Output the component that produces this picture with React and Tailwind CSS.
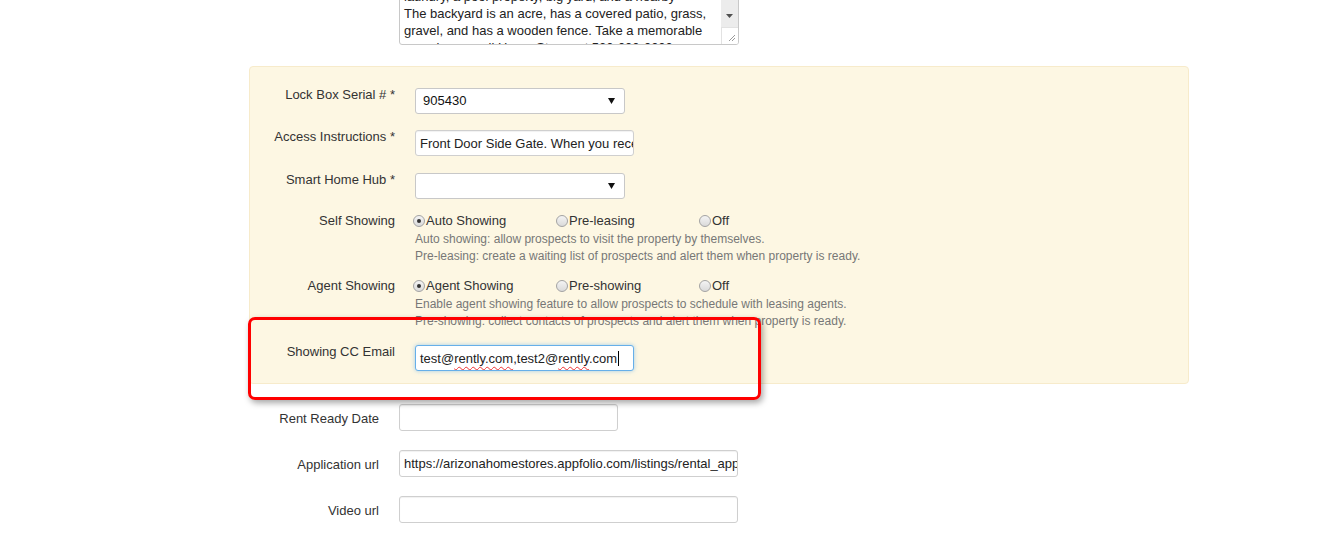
const font = { fontFamily: '"Liberation Sans", Arial, sans-serif' };

const Caret = () => (
  <svg width="7" height="6" viewBox="0 0 7 6" className="absolute right-[9px] top-1/2 -translate-y-1/2">
    <path d="M0 0 H7 L3.5 6 Z" fill="#111" />
  </svg>
);

const Select = ({ value, width }) => (
  <div className={`relative h-[26px] ${width} rounded-[3px] border border-[#c8c8c8] bg-white pl-[7px] text-[13px] leading-[24px] text-[#111]`}>
    {value}
    <Caret />
  </div>
);

const TextBox = ({ children, width, height = "h-[26px]", focus }) => (
  <div
    className={`${height} ${width} overflow-hidden whitespace-nowrap rounded-[3px] border bg-white pl-[4px] text-[13px] leading-[25px] text-[#222] ${
      focus
        ? "border-[#66afe9] shadow-[0_0_4px_rgba(102,175,233,0.6)]"
        : "border-[#cfcfcf] shadow-[inset_0_1px_1px_rgba(0,0,0,0.06)]"
    }`}
  >
    {children}
  </div>
);

const Radio = ({ checked, label }) => (
  <div className="flex w-[143px] items-center">
    <span className="flex h-[12px] w-[12px] items-center justify-center rounded-full border border-[#a3a3a3] bg-gradient-to-b from-[#f4f4f4] to-[#dadada]">
      {checked && <span className="h-[4px] w-[4px] rounded-full bg-[#333]" />}
    </span>
    <span className="ml-[1px] text-[13px] leading-[13px] text-[#333]">{label}</span>
  </div>
);

const PanelRow = ({ label, children, className = "" }) => (
  <div className={`flex gap-[20px] ${className}`}>
    <div className="w-[145px] shrink-0 text-right text-[13px] leading-[13px] text-[#333]">{label}</div>
    <div>{children}</div>
  </div>
);

const OuterRow = ({ label, children, className = "" }) => (
  <div className={`flex items-center gap-[20px] ${className}`}>
    <div className="w-[145px] shrink-0 pt-[2px] text-right text-[13px] text-[#333]">{label}</div>
    {children}
  </div>
);

const Help = ({ lines }) => (
  <div className="mt-[4px] text-[12px] leading-[17px] text-[#777]">
    {lines.map((l) => (
      <div key={l}>{l}</div>
    ))}
  </div>
);

export default function App() {
  return (
    <div className="relative h-[536px] w-[1326px] overflow-hidden bg-white" style={font}>
      <div className="ml-[234px] w-[970px]">
        {/* description textarea, scrolled */}
        <div className="ml-[165px] mt-[-44px] flex h-[89px] w-[340px] overflow-hidden rounded-[3px] border border-[#c8c8c8] bg-white">
          <div className="flex-1 overflow-hidden pl-[4px] pt-[14px] text-[13px] leading-[17px] text-[#222]">
            <div>bathrooms, a pool, a spacious family room, and</div>
            <div>laundry, a pool property, big yard, and a nearby</div>
            <div>The backyard is an acre, has a covered patio, grass,</div>
            <div>gravel, and has a wooden fence. Take a memorable</div>
            <div>experience, call Home Stores at 520-000-0000 or email</div>
          </div>
          <div className="flex w-[17px] shrink-0 flex-col">
            <div className="flex flex-1 items-end justify-center bg-[#ececec] pb-[9px]">
              <svg width="7" height="4" viewBox="0 0 7 4">
                <path d="M0 0 H7 L3.5 4 Z" fill="#505050" />
              </svg>
            </div>
            <div className="relative h-[17px] border-l border-t border-[#e2e2e2] bg-white">
              <svg width="9" height="9" viewBox="0 0 9 9" className="absolute bottom-[2px] right-[2px]">
                <path d="M8 2 L2 8 M8 5 L5 8" stroke="#9a9a9a" strokeWidth="1" />
              </svg>
            </div>
          </div>
        </div>

        {/* showing settings panel */}
        <div className="mx-[15px] mt-[21px] rounded-[4px] border border-[#f7ebcb] bg-[#fdf7e3] pb-[12px] pt-[21px]">
          <PanelRow label="Lock Box Serial # *">
            <Select value="905430" width="w-[210px]" />
          </PanelRow>
          <PanelRow label="Access Instructions *" className="mt-[16px]">
            <TextBox width="w-[219px]">Front Door Side Gate. When you receive the code</TextBox>
          </PanelRow>
          <PanelRow label="Smart Home Hub *" className="mt-[17px]">
            <Select value="" width="w-[210px]" />
          </PanelRow>
          <PanelRow label="Self Showing" className="mt-[15px]">
            <div className="-ml-[2px] flex">
              <Radio checked label="Auto Showing" />
              <Radio label="Pre-leasing" />
              <Radio label="Off" />
            </div>
            <Help
              lines={[
                "Auto showing: allow prospects to visit the property by themselves.",
                "Pre-leasing: create a waiting list of prospects and alert them when property is ready.",
              ]}
            />
          </PanelRow>
          <PanelRow label="Agent Showing" className="mt-[14px]">
            <div className="-ml-[2px] flex">
              <Radio checked label="Agent Showing" />
              <Radio label="Pre-showing" />
              <Radio label="Off" />
            </div>
            <Help
              lines={[
                "Enable agent showing feature to allow prospects to schedule with leasing agents.",
                "Pre-showing: collect contacts of prospects and alert them when property is ready.",
              ]}
            />
          </PanelRow>
          <PanelRow label="Showing CC Email" className="mt-[15px]">
            <TextBox width="w-[219px]" focus>
              test@
              <span className="underline decoration-[#e33] decoration-wavy decoration-1 underline-offset-[3px]">rently.com</span>
              ,test2@
              <span className="underline decoration-[#e33] decoration-wavy decoration-1 underline-offset-[3px]">rently</span>
              .com
              <span className="ml-[1px] inline-block h-[15px] w-[1px] translate-y-[3px] bg-black" />
            </TextBox>
          </PanelRow>
        </div>

        <OuterRow label="Rent Ready Date" className="mt-[20px]">
          <TextBox width="w-[219px]" height="h-[27px]" />
        </OuterRow>
        <OuterRow label="Application url" className="mt-[19px]">
          <TextBox width="w-[339px]" height="h-[27px]">
            https://arizonahomestores.appfolio.com/listings/rental_applications/new
          </TextBox>
        </OuterRow>
        <OuterRow label="Video url" className="mt-[19px]">
          <TextBox width="w-[339px]" height="h-[27px]" />
        </OuterRow>
      </div>

      {/* annotation highlight */}
      <div className="pointer-events-none absolute left-[248px] top-[317px] h-[83px] w-[513px] rounded-[7px] border-[3px] border-[#f00] shadow-[2px_3px_6px_rgba(0,0,0,0.35)]" />
    </div>
  );
}
